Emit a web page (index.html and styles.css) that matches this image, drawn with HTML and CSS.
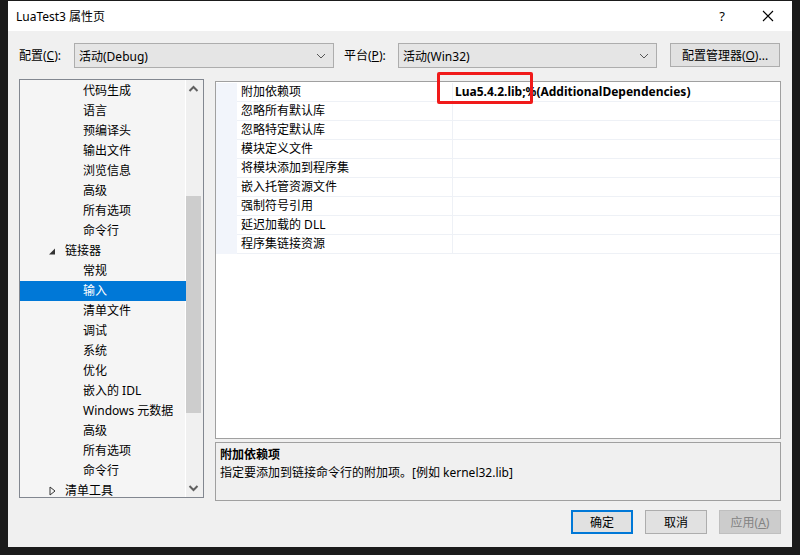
FILE: index.html
```html
<!DOCTYPE html>
<html lang="zh-CN">
<head>
<meta charset="utf-8">
<title>LuaTest3 属性页</title>
<link rel="stylesheet" href="styles.css">
</head>
<body>
<div class="window">
  <div class="titlebar">
    <span class="title">LuaTest3 属性页</span>
    <span class="help">?</span>
    <span class="close">
      <svg width="12" height="12" viewBox="0 0 12 12"><path d="M1 1L11 11M11 1L1 11" stroke="#000" stroke-width="1.1" fill="none"/></svg>
    </span>
  </div>

  <div class="content">
    <div class="config-row">
      <span class="label">配置(<u>C</u>):</span>
      <div class="combo combo-config">
        <span>活动(Debug)</span>
        <svg class="chev" width="10" height="6" viewBox="0 0 10 6"><path d="M1 1L5 5L9 1" stroke="#555" stroke-width="1" fill="none"/></svg>
      </div>
      <span class="label label-platform">平台(<u>P</u>):</span>
      <div class="combo combo-platform">
        <span>活动(Win32)</span>
        <svg class="chev" width="10" height="6" viewBox="0 0 10 6"><path d="M1 1L5 5L9 1" stroke="#555" stroke-width="1" fill="none"/></svg>
      </div>
      <button class="btn btn-manager">配置管理器(<u>O</u>)...</button>
    </div>

    <div class="main">
      <div class="tree">
        <ul class="tree-list">
          <li class="child">代码生成</li>
          <li class="child">语言</li>
          <li class="child">预编译头</li>
          <li class="child">输出文件</li>
          <li class="child">浏览信息</li>
          <li class="child">高级</li>
          <li class="child">所有选项</li>
          <li class="child">命令行</li>
          <li class="parent"><svg class="tri" width="7" height="7" viewBox="0 0 7 7"><path d="M6 0.5V6.5H0Z" fill="#333"/></svg>链接器</li>
          <li class="child">常规</li>
          <li class="child selected">输入</li>
          <li class="child">清单文件</li>
          <li class="child">调试</li>
          <li class="child">系统</li>
          <li class="child">优化</li>
          <li class="child">嵌入的 IDL</li>
          <li class="child">Windows 元数据</li>
          <li class="child">高级</li>
          <li class="child">所有选项</li>
          <li class="child">命令行</li>
          <li class="parent"><svg class="tri" width="7" height="10" viewBox="0 0 7 10"><path d="M1 1V9L6 5Z" fill="none" stroke="#333" stroke-width="1"/></svg>清单工具</li>
        </ul>
        <div class="scrollbar">
          <svg class="sb-arrow" width="15" height="17" viewBox="0 0 15 17"><path d="M3.5 11L7.5 7L11.5 11" stroke="#606060" stroke-width="2" fill="none"/></svg>
          <div class="sb-track"><div class="sb-thumb"></div></div>
          <svg class="sb-arrow" width="15" height="17" viewBox="0 0 15 17"><path d="M3.5 6L7.5 10L11.5 6" stroke="#606060" stroke-width="2" fill="none"/></svg>
        </div>
      </div>

      <div class="right">
        <div class="grid">
          <div class="row"><div class="gutter"></div><div class="name">附加依赖项</div><div class="value bold">Lua5.4.2.lib;%(AdditionalDependencies)</div></div>
          <div class="row"><div class="gutter"></div><div class="name">忽略所有默认库</div><div class="value"></div></div>
          <div class="row"><div class="gutter"></div><div class="name">忽略特定默认库</div><div class="value"></div></div>
          <div class="row"><div class="gutter"></div><div class="name">模块定义文件</div><div class="value"></div></div>
          <div class="row"><div class="gutter"></div><div class="name">将模块添加到程序集</div><div class="value"></div></div>
          <div class="row"><div class="gutter"></div><div class="name">嵌入托管资源文件</div><div class="value"></div></div>
          <div class="row"><div class="gutter"></div><div class="name">强制符号引用</div><div class="value"></div></div>
          <div class="row"><div class="gutter"></div><div class="name">延迟加载的 DLL</div><div class="value"></div></div>
          <div class="row"><div class="gutter"></div><div class="name">程序集链接资源</div><div class="value"></div></div>
        </div>
        <div class="desc">
          <div class="desc-title">附加依赖项</div>
          <div class="desc-text">指定要添加到链接命令行的附加项。[例如 kernel32.lib]</div>
        </div>
      </div>
    </div>

    <div class="buttons">
      <button class="btn btn-ok">确定</button>
      <button class="btn">取消</button>
      <button class="btn btn-disabled">应用(<u>A</u>)</button>
    </div>
  </div>

  <div class="mark"></div>
</div>
</body>
</html>
```

FILE: styles.css
```css
* {
  box-sizing: border-box;
}

html, body {
  margin: 0;
  padding: 0;
}

body {
  background: #1b1b1b;
  width: 800px;
  height: 555px;
  overflow: hidden;
  font-family: "Noto Sans", "Noto Sans CJK SC", sans-serif;
  font-size: 12px;
  color: #000;
}

.window {
  position: relative;
  margin: 1px 0 0 8px;
  width: 784px;
  height: 546px;
  display: flex;
  flex-direction: column;
  background: #f0f0f0;
}

/* title bar */
.titlebar {
  height: 30px;
  background: #fff;
  display: flex;
  align-items: center;
  padding-left: 8px;
}

.title {
  flex: 1;
  font-size: 12px;
}

.help {
  width: 30px;
  text-align: center;
  font-size: 13px;
  margin-right: 16px;
}

.close {
  width: 30px;
  height: 30px;
  display: flex;
  align-items: center;
  justify-content: center;
  margin-right: 9px;
}

/* dialog body */
.content {
  flex: 1;
  padding: 12px 11px 0 11px;
  display: flex;
  flex-direction: column;
}

.config-row {
  display: flex;
  align-items: center;
  height: 25px;
}

.label {
  width: 55px;
  line-height: 25px;
}

.label-platform {
  width: 54px;
  margin-left: 10px;
}

.combo {
  height: 25px;
  border: 1px solid #adadad;
  background: #e5e5e5;
  display: flex;
  align-items: center;
  justify-content: space-between;
  padding: 0 7px 0 4px;
}

.combo-config {
  width: 260px;
}

.combo-platform {
  width: 259px;
}

.btn {
  font-family: inherit;
  font-size: 12px;
  color: #000;
  background: #e1e1e1;
  border: 1px solid #adadad;
  height: 24px;
  padding: 0;
  margin: 0;
}

.btn-manager {
  width: 110px;
  margin-left: 13px;
  margin-top: -1px;
}

/* tree + grid */
.main {
  display: flex;
  gap: 11px;
  margin-top: 11px;
}

.tree {
  width: 185px;
  height: 419px;
  border: 1px solid #828790;
  background: #f5f5f5;
  display: flex;
  overflow: hidden;
}

.tree-list {
  list-style: none;
  margin: 0;
  padding: 1px 0 0 0;
  width: 166px;
  border-right: 1px solid #fff;
}

.tree-list li {
  height: 20px;
  line-height: 20px;
  white-space: nowrap;
  display: flex;
  align-items: center;
}

.tree-list li.child {
  padding-left: 63px;
}

.tree-list li.parent {
  padding-left: 29px;
}

.tri {
  margin-right: 9px;
}

.tree-list li.selected {
  background: #0078d7;
  color: #fff;
  margin-right: -1px;
}

.scrollbar {
  width: 17px;
  background: #f0f0f0;
  display: flex;
  flex-direction: column;
  align-items: flex-start;
}

.sb-arrow {
  flex: none;
}

.sb-track {
  flex: 1;
  width: 15px;
}

.sb-thumb {
  margin-top: 99px;
  width: 15px;
  height: 217px;
  background: #cdcdcd;
}

.right {
  width: 566px;
  display: flex;
  flex-direction: column;
  margin-top: 2px;
}

.grid {
  height: 358px;
  border: 1px solid #a0a0a0;
  background: #fff;
  padding-top: 1px;
}

.row {
  display: flex;
  height: 19px;
}

.gutter {
  width: 21px;
  background: #f2f5fb;
}

.name {
  width: 216px;
  padding-left: 4px;
  line-height: 18px;
  border-bottom: 1px solid #eef1f6;
  border-right: 1px solid #eef1f6;
}

.value {
  flex: 1;
  padding-left: 2px;
  line-height: 18px;
  border-bottom: 1px solid #eef1f6;
}

.bold {
  font-weight: bold;
}

.desc {
  margin-top: 3px;
  height: 59px;
  border: 1px solid #a0a0a0;
  background: #f0f0f0;
  padding: 3px 4px 2px;
  line-height: 18px;
}

.desc-title {
  font-weight: bold;
}

.buttons {
  display: flex;
  justify-content: flex-end;
  gap: 12px;
  margin-top: 9px;
}

.buttons .btn {
  width: 62px;
}

.btn-ok {
  border: 2px solid #0078d7;
}

.btn-disabled {
  background: #cccccc;
  border-color: #bfbfbf;
  color: #838383;
}

/* red highlight drawn over the value cell */
.mark {
  position: absolute;
  left: 429px;
  top: 71px;
  width: 96px;
  height: 32px;
  border: 3px solid #f01a1a;
  border-radius: 2px;
}
```
